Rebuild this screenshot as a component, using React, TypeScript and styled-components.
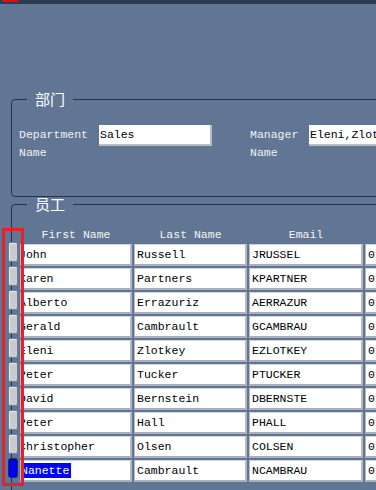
import React from "react";
import styled, { createGlobalStyle } from "styled-components";

interface Employee {
  first: string;
  last: string;
  email: string;
  phone: string;
}

const employees: Employee[] = [
  { first: "John", last: "Russell", email: "JRUSSEL", phone: "011.44.1344.429268" },
  { first: "Karen", last: "Partners", email: "KPARTNER", phone: "011.44.1344.467268" },
  { first: "Alberto", last: "Errazuriz", email: "AERRAZUR", phone: "011.44.1344.429278" },
  { first: "Gerald", last: "Cambrault", email: "GCAMBRAU", phone: "011.44.1344.619268" },
  { first: "Eleni", last: "Zlotkey", email: "EZLOTKEY", phone: "011.44.1344.429018" },
  { first: "Peter", last: "Tucker", email: "PTUCKER", phone: "011.44.1344.129268" },
  { first: "David", last: "Bernstein", email: "DBERNSTE", phone: "011.44.1344.345268" },
  { first: "Peter", last: "Hall", email: "PHALL", phone: "011.44.1344.478968" },
  { first: "Christopher", last: "Olsen", email: "COLSEN", phone: "011.44.1344.498718" },
  { first: "Nanette", last: "Cambrault", email: "NCAMBRAU", phone: "011.44.1344.987668" },
];

const MONO = `"Liberation Mono", "DejaVu Sans Mono", monospace`;
const COLS = "10px 112px 113px 114px 113px";

const GlobalStyle = createGlobalStyle`
  body {
    margin: 0;
    background: #617694;
  }
`;

const App: React.FC = () => {
  const selected = employees.length - 1;

  return (
    <>
      <GlobalStyle />
      <Frame>
        <TopBar>
          <Mark />
        </TopBar>

        <Group $first>
          <Legend>部门</Legend>
          <FormRow>
            <Label $width={80}>Department Name</Label>
            <Field>Sales</Field>
            <Label $width={59} style={{ marginLeft: 38 }}>
              Manager Name
            </Label>
            <Field>Eleni,Zlotkey</Field>
          </FormRow>
        </Group>

        <Group>
          <Legend>员工</Legend>
          <Table>
            <Row>
              <span />
              <Heading>First Name</Heading>
              <Heading>Last Name</Heading>
              <Heading>Email</Heading>
              <Heading>Phone Number</Heading>
            </Row>
            {employees.map((emp, index) => (
              <Row key={emp.email}>
                <Selector $active={index === selected} />
                <Cell $scrolled>
                  {index === selected ? <Picked>{emp.first}</Picked> : emp.first}
                </Cell>
                <Cell>{emp.last}</Cell>
                <Cell>{emp.email}</Cell>
                <Cell>{emp.phone}</Cell>
              </Row>
            ))}
            <Highlight />
          </Table>
        </Group>
      </Frame>
    </>
  );
};

const Frame = styled.div`
  width: 376px;
  height: 490px;
  overflow: hidden;
  background: #617694;
  font-family: ${MONO};
`;

const TopBar = styled.div`
  height: 4px;
  background: #2d3a51;
  margin-bottom: 86px;
  display: flex;
`;

const Mark = styled.div`
  width: 16px;
  height: 2px;
  margin-left: 2px;
  background: #ff0000;
`;

const Group = styled.fieldset<{ $first?: boolean }>`
  margin: ${(p) => (p.$first ? "0" : "-2px")} 0 0 11px;
  padding: ${(p) => (p.$first ? "17px 0 34px 7px" : "15px 0 40px 7px")};
  width: 440px;
  min-width: 0;
  border: 1px solid #27334b;
  border-radius: 4px;
`;

const Legend = styled.legend`
  margin-left: 8px;
  padding: 0 8px;
  font: 15px/18px "Noto Sans CJK SC", sans-serif;
  color: #ffffff;
`;

const FormRow = styled.div`
  display: flex;
  align-items: flex-start;
`;

const Label = styled.div<{ $width: number }>`
  width: ${(p) => p.$width}px;
  flex: none;
  margin-top: 1px;
  font-size: 11.5px;
  line-height: 18px;
  color: #f2f2f2;
`;

const Field = styled.div`
  width: 110px;
  height: 19px;
  flex: none;
  padding-left: 1px;
  background: #ffffff;
  border-right: 2px solid #b9bcc2;
  border-bottom: 2px solid #b9bcc2;
  font-size: 11.5px;
  line-height: 20px;
  color: #000;
  white-space: nowrap;
  overflow: hidden;
`;

const Table = styled.div`
  position: relative;
  margin-left: -11px;
  display: flex;
  flex-direction: column;
  gap: 2px;
`;

const Row = styled.div`
  display: grid;
  grid-template-columns: ${COLS};
  column-gap: 2px;
`;

const Heading = styled.div`
  height: 14px;
  text-align: center;
  font-size: 11.5px;
  line-height: 14px;
  color: #f4f4f4;
  white-space: nowrap;
`;

const Selector = styled.div<{ $active: boolean }>`
  height: 20px;
  margin-top: -2px;
  box-sizing: border-box;
  border: 1px solid ${(p) => (p.$active ? "#1c2a56" : "#6f7d92")};
  border-radius: ${(p) => (p.$active ? "3px" : "2px")};
  background: ${(p) => (p.$active ? "#0000f0" : "#c9cbcf")};
  box-shadow: ${(p) => (p.$active ? "none" : "inset 1px 1px 0 #e6e8ea")};
`;

const Cell = styled.div<{ $scrolled?: boolean }>`
  height: 19px;
  background: #ffffff;
  border-top: 1px solid #cfd4dc;
  border-left: 1px solid #b3bbc7;
  border-right: 2px solid #b3bbc7;
  border-bottom: 2px solid #a9b1bd;
  padding-left: ${(p) => (p.$scrolled ? "0" : "2px")};
  text-indent: ${(p) => (p.$scrolled ? "-2px" : "0")};
  font-size: 11.5px;
  line-height: 19px;
  color: #000;
  white-space: nowrap;
  overflow: hidden;
`;

const Picked = styled.span`
  background: #0000ff;
  color: #ffffff;
  padding: 1px 2px 1px 2px;
`;

const Highlight = styled.div`
  position: absolute;
  top: 0;
  left: -6px;
  bottom: -4px;
  width: 22px;
  box-sizing: border-box;
  border: 3px solid #e5212a;
  pointer-events: none;
`;

export default App;
